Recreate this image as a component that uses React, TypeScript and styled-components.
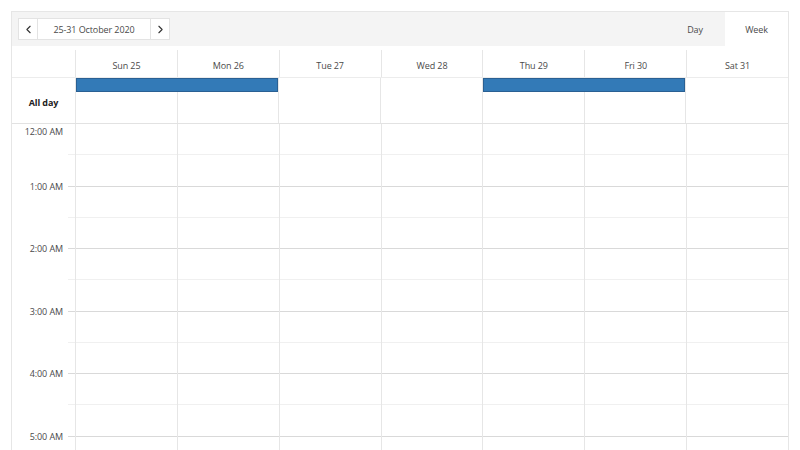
import React from 'react';
import styled, { createGlobalStyle } from 'styled-components';
import { ChevronLeft, ChevronRight } from 'lucide-react';

const GlobalStyle = createGlobalStyle`
  html, body {
    margin: 0;
    padding: 0;
    background: #fff;
    overflow: hidden;
  }
  body {
    font-family: "Open Sans", "Noto Sans", sans-serif;
    color: #4a4a4a;
    letter-spacing: -0.1px;
  }
`;

const Page = styled.div`
  width: 800px;
  height: 450px;
  padding: 11px 0 0 11px;
  box-sizing: border-box;
  overflow: hidden;
`;

const Scheduler = styled.div`
  width: 778px;
  border: 1px solid #e6e6e6;
  border-bottom: none;
  box-sizing: border-box;
`;

const Toolbar = styled.div`
  display: flex;
  align-items: stretch;
  height: 34px;
  background: #f4f4f4;
`;

const NavGroup = styled.div`
  display: flex;
  align-self: center;
  height: 22px;
  margin-left: 6px;
  border: 1px solid #e3e3e3;
  background: #fff;
  box-sizing: border-box;
`;

const NavButton = styled.button`
  display: flex;
  align-items: center;
  justify-content: center;
  width: 18px;
  padding: 0;
  border: none;
  background: transparent;
  color: #333;
  cursor: pointer;
`;

const RangeLabel = styled.div`
  display: flex;
  align-items: center;
  justify-content: center;
  width: 112px;
  border-left: 1px solid #e3e3e3;
  border-right: 1px solid #e3e3e3;
  font-size: 9px;
`;

const Spacer = styled.div`
  flex: 1;
`;

const Tab = styled.div<{ $active?: boolean; $width: number }>`
  display: flex;
  align-items: center;
  justify-content: center;
  width: ${p => p.$width}px;
  background: ${p => (p.$active ? '#fff' : 'transparent')};
  font-size: 9px;
`;

const Row = styled.div`
  display: flex;
`;

const HeaderRow = styled(Row)`
  margin-top: 4px;
  height: 27px;
  border-bottom: 1px solid #ececec;
`;

const Gutter = styled.div`
  width: 63px;
  flex: none;
  border-right: 1px solid #e6e6e6;
  box-sizing: content-box;
`;

const DayHead = styled.div<{ $last?: boolean }>`
  flex: 1;
  display: flex;
  align-items: center;
  justify-content: center;
  padding-top: 4px;
  border-right: ${p => (p.$last ? 'none' : '1px solid #e6e6e6')};
  font-size: 9px;
`;

const AllDayRow = styled(Row)`
  height: 45px;
  border-bottom: 1px solid #e2e2e2;
`;

const AllDayLabel = styled(Gutter)`
  display: flex;
  align-items: center;
  justify-content: center;
  padding-top: 3px;
  box-sizing: border-box;
  width: 64px;
  font-size: 9px;
  font-weight: 700;
  color: #222;
`;

const AllDayGrid = styled.div`
  flex: 1;
  display: grid;
  grid-template-columns: repeat(7, 1fr);
  grid-template-rows: 16px 1fr;
`;

const AllDayCell = styled.div<{ $col: number }>`
  grid-column: ${p => p.$col};
  grid-row: 1 / span 2;
  border-right: ${p => (p.$col === 7 ? 'none' : '1px solid #e6e6e6')};
`;

const EventBar = styled.div<{ $from: number; $span: number }>`
  grid-column: ${p => p.$from} / span ${p => p.$span};
  grid-row: 1;
  margin: 0 1px 2px 0;
  background: #337ab7;
  border: 1px solid #2a6093;
  z-index: 1;
`;

const Body = styled(Row)``;

const TimeColumn = styled.div`
  width: 64px;
  flex: none;
  border-right: 1px solid #e6e6e6;
  box-sizing: border-box;
`;

const Slot = styled.div<{ $hour?: boolean }>`
  height: 31.25px;
  box-sizing: border-box;
  border-bottom: 1px solid ${p => (p.$hour ? '#d9d9d9' : '#f0f0f0')};
`;

const TimeSlot = styled.div<{ $hour?: boolean }>`
  position: relative;
  height: 31.25px;
  box-sizing: border-box;
  &::after {
    content: '';
    position: absolute;
    right: 0;
    bottom: 0;
    width: 7px;
    height: 1px;
    background: ${p => (p.$hour ? '#d9d9d9' : '#f0f0f0')};
  }
`;

const TimeLabel = styled.span<{ $first?: boolean }>`
  position: absolute;
  right: 12px;
  top: ${p => (p.$first ? '0px' : '-8px')};
  line-height: 16px;
  font-size: 9px;
  white-space: nowrap;
`;

const DayColumn = styled.div<{ $last?: boolean }>`
  flex: 1;
  border-right: ${p => (p.$last ? 'none' : '1px solid #e6e6e6')};
`;

const days = ['Sun 25', 'Mon 26', 'Tue 27', 'Wed 28', 'Thu 29', 'Fri 30', 'Sat 31'];
const hours = ['12:00 AM', '1:00 AM', '2:00 AM', '3:00 AM', '4:00 AM', '5:00 AM'];
const events = [
  { from: 1, span: 2 },
  { from: 5, span: 2 },
];

const App: React.FC = () => {
  const slots = hours.flatMap((h, i) => [
    { key: `${i}a`, label: h, hourEnd: false, first: i === 0 },
    { key: `${i}b`, label: '', hourEnd: true, first: false },
  ]);

  return (
    <>
      <GlobalStyle />
      <Page>
        <Scheduler>
          <Toolbar>
            <NavGroup>
              <NavButton aria-label="Previous">
                <ChevronLeft size={13} strokeWidth={2} />
              </NavButton>
              <RangeLabel>25-31 October 2020</RangeLabel>
              <NavButton aria-label="Next">
                <ChevronRight size={13} strokeWidth={2} />
              </NavButton>
            </NavGroup>
            <Spacer />
            <Tab $width={60}>Day</Tab>
            <Tab $width={63} $active>Week</Tab>
          </Toolbar>

          <HeaderRow>
            <Gutter />
            {days.map((d, i) => (
              <DayHead key={d} $last={i === days.length - 1}>{d}</DayHead>
            ))}
          </HeaderRow>

          <AllDayRow>
            <AllDayLabel>All day</AllDayLabel>
            <AllDayGrid>
              {days.map((d, i) => (
                <AllDayCell key={d} $col={i + 1} />
              ))}
              {events.map(e => (
                <EventBar key={e.from} $from={e.from} $span={e.span} />
              ))}
            </AllDayGrid>
          </AllDayRow>

          <Body>
            <TimeColumn>
              {slots.map(s => (
                <TimeSlot key={s.key} $hour={s.hourEnd}>
                  {s.label && <TimeLabel $first={s.first}>{s.label}</TimeLabel>}
                </TimeSlot>
              ))}
            </TimeColumn>
            {days.map((d, i) => (
              <DayColumn key={d} $last={i === days.length - 1}>
                {slots.map(s => (
                  <Slot key={s.key} $hour={s.hourEnd} />
                ))}
              </DayColumn>
            ))}
          </Body>
        </Scheduler>
      </Page>
    </>
  );
};

export default App;
